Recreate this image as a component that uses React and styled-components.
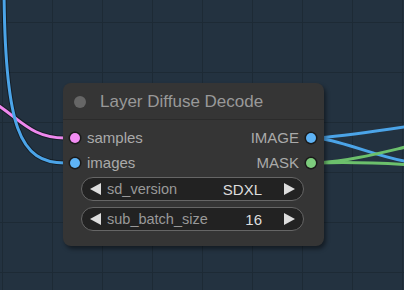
import styled, { createGlobalStyle } from "styled-components";

const GlobalStyle = createGlobalStyle`
  html, body {
    margin: 0;
    padding: 0;
    background: #233240;
  }
`;

const Canvas = styled.div`
  position: relative;
  width: 404px;
  height: 290px;
  overflow: hidden;
  box-sizing: border-box;
  padding: 83px 0 0 63px;
  background-color: #233240;
  background-image:
    linear-gradient(to right, #1d2a35 1px, transparent 1px),
    linear-gradient(to bottom, #1d2a35 1px, transparent 1px);
  background-size: 50px 50px;
  background-position: 2px 22px;
  font-family: "Liberation Sans", Arial, sans-serif;
`;

const Wires = styled.svg`
  position: absolute;
  left: 0;
  top: 0;
  width: 404px;
  height: 290px;
`;

const Node = styled.div`
  position: relative;
  width: 261px;
  height: 163px;
  background: #353535;
  border-radius: 8px;
  box-shadow: 2px 3px 4px rgba(0, 0, 0, 0.45);
  display: flex;
  flex-direction: column;
`;

const TitleBar = styled.div`
  height: 37px;
  display: flex;
  align-items: center;
  gap: 14px;
  padding: 2px 0 0 11px;
  box-sizing: border-box;
  border-bottom: 1px solid #2b2b2b;
  color: #999;
  font-size: 17px;
`;

const TitleDot = styled.span`
  width: 12px;
  height: 12px;
  border-radius: 50%;
  background: #666;
`;

const Slots = styled.div`
  display: flex;
  flex-direction: column;
  padding-top: 5px;
`;

const SlotRow = styled.div`
  height: 25px;
  display: flex;
  align-items: center;
  justify-content: space-between;
  padding: 0 8px 0 7px;
  font-size: 15px;
  color: #aaa;
`;

const Slot = styled.div`
  display: flex;
  align-items: center;
  gap: 7px;
`;

const Dot = styled.span`
  width: 10px;
  height: 10px;
  border-radius: 50%;
  background: ${(p) => p.color};
  box-shadow: 0 0 0 1.5px #1a1a1a;
`;

const Widgets = styled.div`
  display: flex;
  flex-direction: column;
  gap: 6px;
  padding: 2px 20px 0 18px;
`;

const Widget = styled.div`
  height: 22px;
  border: 1px solid #666;
  border-radius: 12px;
  background: #222;
  display: flex;
  align-items: center;
  padding: 0 8px;
  font-size: 14.5px;
`;

const Arrow = styled.span`
  width: 0;
  height: 0;
  border-top: 6.5px solid transparent;
  border-bottom: 6.5px solid transparent;
  ${(p) => (p.left ? "border-right: 11px solid #ddd;" : "border-left: 11px solid #ddd;")}
`;

const Label = styled.span`
  color: #999;
  margin-left: 6px;
  flex: 1;
`;

const Value = styled.span`
  color: #ddd;
  font-size: 15px;
  margin-right: 22px;
`;

export default function App() {
  return (
    <>
      <GlobalStyle />
      <Canvas>
        <Wires viewBox="0 0 404 290">
          <g fill="none" strokeWidth="5" strokeLinecap="round" opacity="0.4" stroke="#000">
            <path d="M -10 100 C 20 118, 30 138, 65 138" />
            <path d="M 4 -20 C 4 130, 20 163, 65 163" />
          </g>
          <g fill="none" strokeWidth="3" strokeLinecap="round">
            <path d="M -10 100 C 20 118, 30 138, 65 138" stroke="#ee88ee" />
            <path d="M 4 -20 C 4 130, 20 163, 65 163" stroke="#4ba4e8" />
            <path d="M 318 138 C 350 135, 370 132, 410 126" stroke="#4ba4e8" />
            <path d="M 318 138 C 350 143, 380 158, 410 162" stroke="#4ba4e8" />
            <path d="M 318 163 C 350 161, 380 153, 410 146" stroke="#6cc06c" />
            <path d="M 318 163 C 350 162, 380 163, 410 165" stroke="#6cc06c" />
          </g>
        </Wires>
        <Node>
          <TitleBar>
            <TitleDot />
            Layer Diffuse Decode
          </TitleBar>
          <Slots>
            <SlotRow>
              <Slot>
                <Dot color="#f28cf2" />
                samples
              </Slot>
              <Slot>
                IMAGE
                <Dot color="#5eb3f5" />
              </Slot>
            </SlotRow>
            <SlotRow>
              <Slot>
                <Dot color="#5eb3f5" />
                images
              </Slot>
              <Slot>
                MASK
                <Dot color="#7dcc7d" />
              </Slot>
            </SlotRow>
          </Slots>
          <Widgets>
            <Widget>
              <Arrow left />
              <Label>sd_version</Label>
              <Value>SDXL</Value>
              <Arrow />
            </Widget>
            <Widget>
              <Arrow left />
              <Label>sub_batch_size</Label>
              <Value>16</Value>
              <Arrow />
            </Widget>
          </Widgets>
        </Node>
      </Canvas>
    </>
  );
}
